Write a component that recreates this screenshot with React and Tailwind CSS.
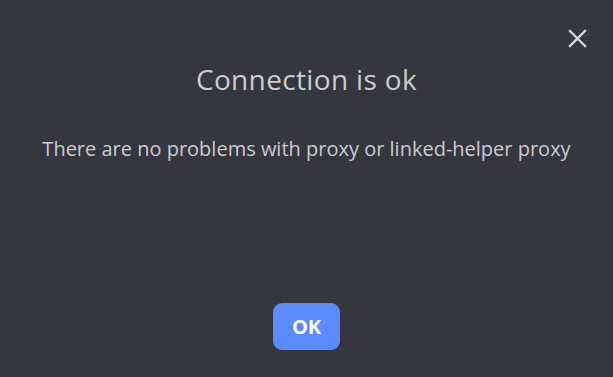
import React from "react";

export default function App() {
  return (
    <div className="w-[613px] h-[377px] bg-[#35363e] flex flex-col items-center relative" style={{ fontFamily: "'Open Sans', 'Noto Sans', sans-serif" }}>
      <button className="absolute right-[26px] top-[29px] w-[19px] h-[19px] flex items-center justify-center">
        <svg width="19" height="19" viewBox="0 0 19 19">
          <path d="M2 2 L17 17 M17 2 L2 17" stroke="#d6d6d8" strokeWidth="2.4" strokeLinecap="square" />
        </svg>
      </button>
      <h1 className="mt-[61px] text-[28px] leading-[36px] text-[#cbccd0] font-normal tracking-[0.35px]">Connection is ok</h1>
      <p className="mt-[39px] text-[20px] leading-[26px] text-[#cbccd0]">There are no problems with proxy or linked-helper proxy</p>
      <button className="mt-auto mb-[27px] w-[67px] h-[47px] rounded-[9px] bg-[#5b8cff] text-white text-[20px] font-bold">OK</button>
    </div>
  );
}
